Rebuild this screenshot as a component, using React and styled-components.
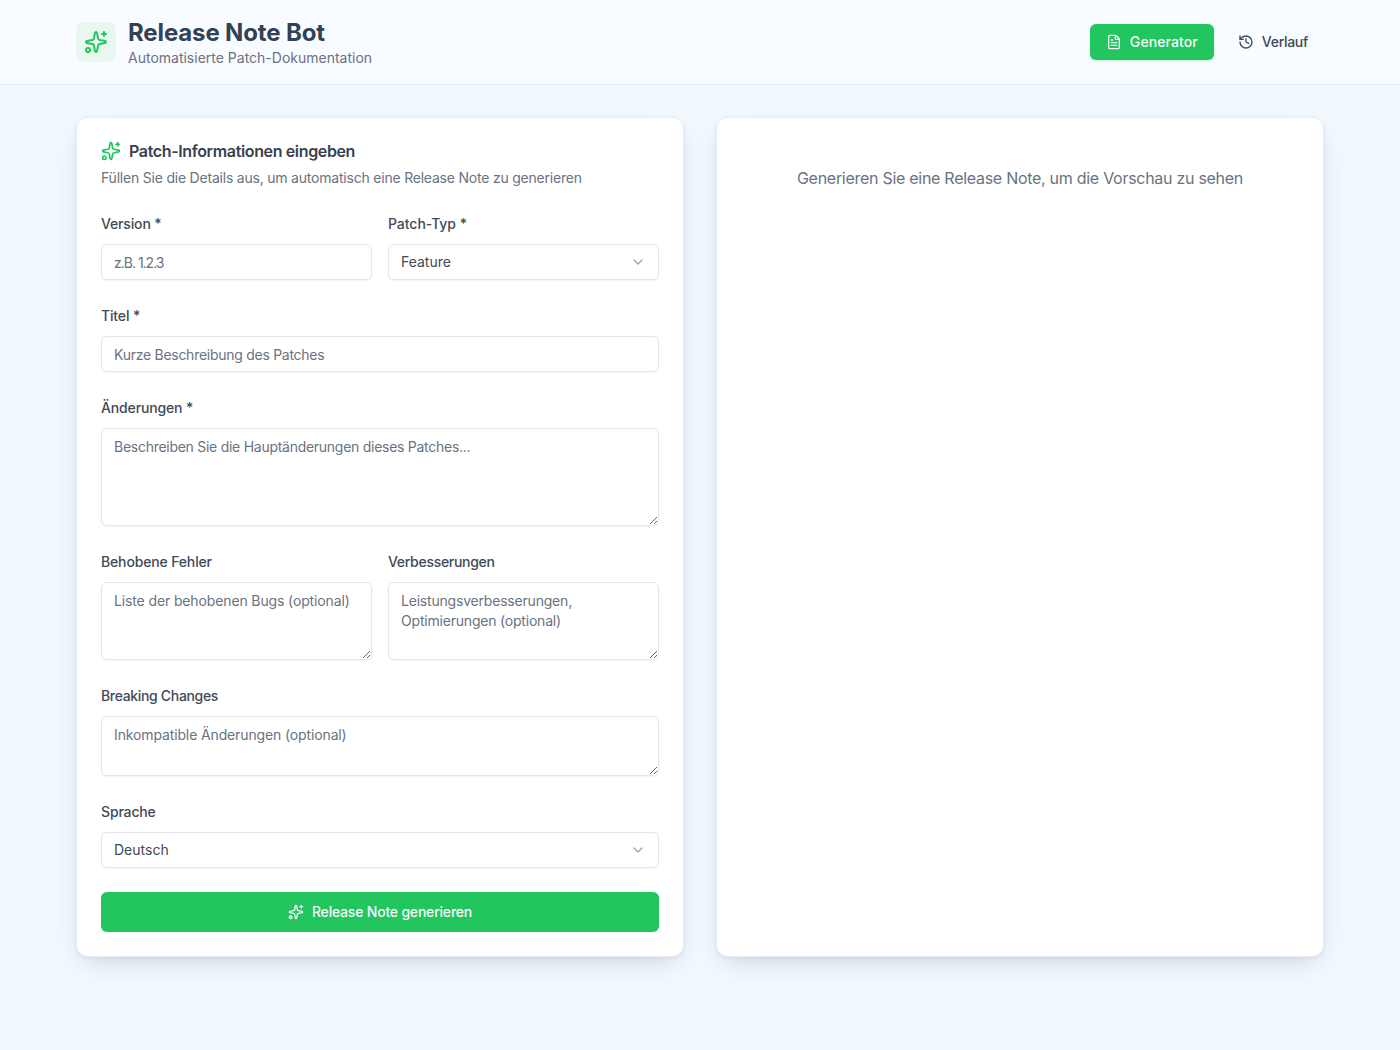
import React from "react";
import styled, { createGlobalStyle } from "styled-components";
import { Sparkles, FileText, History, ChevronDown } from "lucide-react";

const Global = createGlobalStyle`
  * { box-sizing: border-box; }
  html, body { margin: 0; padding: 0; }
  body { background: #f1f8fe; font-family: "Inter", "Noto Sans", sans-serif; color: #374151; }
`;

const Page = styled.div`
  min-height: 1050px;
  background: #f1f8fe;
`;
const Header = styled.header`
  height: 85px;
  background: #f8fbff;
  border-bottom: 1px solid #e3e8ef;
`;
const HeaderInner = styled.div`
  max-width: 1280px;
  height: 84px;
  margin: 0 auto;
  padding: 0 16px;
  display: flex;
  align-items: center;
  justify-content: space-between;
`;
const Brand = styled.div`
  display: flex;
  align-items: center;
  gap: 12px;
`;
const LogoBox = styled.div`
  width: 40px;
  height: 40px;
  border-radius: 8px;
  background: #e8f8f0;
  display: flex;
  align-items: center;
  justify-content: center;
  color: #22c55e;
`;
const BrandText = styled.div`
  display: flex;
  flex-direction: column;
`;
const AppTitle = styled.h1`
  margin: 0;
  font-size: 24px;
  line-height: 34px;
  font-weight: 700;
  color: #334155;
  letter-spacing: -0.13px;
`;
const AppSub = styled.p`
  margin: -2px 0 0;
  font-size: 14px;
  line-height: 20px;
  color: #6b7280;
`;
const Nav = styled.nav`
  display: flex;
  align-items: center;
  gap: 8px;
`;
const NavButton = styled.button`
  height: 36px;
  padding: 0 16px;
  border: 0;
  border-radius: 6px;
  display: inline-flex;
  align-items: center;
  gap: 8px;
  font: 500 14px/20px "Inter", sans-serif;
  letter-spacing: ${(p) => (p.$active ? "0.1px" : "-0.3px")};
  cursor: pointer;
  background: ${(p) => (p.$active ? "#22c55e" : "transparent")};
  color: ${(p) => (p.$active ? "#f8fafc" : "#414a56")};
  box-shadow: ${(p) => (p.$active ? "0 1px 3px rgba(34,197,94,.2)" : "none")};
`;
const Main = styled.main`
  max-width: 1280px;
  margin: 0 auto;
  padding: 32px 16px;
  display: grid;
  grid-template-columns: 1fr 1fr;
  gap: 32px;
`;
const Card = styled.section`
  background: #fff;
  border: 1px solid #e8edf3;
  border-radius: 12px;
  box-shadow: 0 10px 30px -10px rgba(30, 41, 59, 0.2), 0 2px 4px rgba(30, 41, 59, 0.06);
  padding: 24px;
`;
const CardTitle = styled.h2`
  margin: 0;
  height: 18px;
  display: flex;
  align-items: center;
  gap: 8px;
  font-size: 16px;
  line-height: 18px;
  font-weight: 600;
  letter-spacing: -0.36px;
  color: #374151;
  svg { color: #22c55e; flex: none; }
`;
const CardDesc = styled.p`
  margin: 8px 0 0;
  font-size: 14px;
  line-height: 20px;
  letter-spacing: -0.21px;
  color: #6b7280;
`;
const Form = styled.form`
  display: flex;
  flex-direction: column;
  gap: 24px;
  margin-top: 24px;
`;
const Row = styled.div`
  display: grid;
  grid-template-columns: 1fr 1fr;
  gap: 16px;
`;
const Field = styled.div`
  display: flex;
  flex-direction: column;
  gap: 8px;
  min-width: 0;
`;
const Label = styled.label`
  font-size: 14px;
  line-height: 24px;
  font-weight: 500;
  letter-spacing: ${(p) => p.$track || "-0.15px"};
  color: #414a56;
`;
const controlBase = `
  width: 100%;
  background: #fff;
  border: 1px solid #e5e7eb;
  border-radius: 6px;
  box-shadow: 0 1px 2px rgba(15, 23, 42, 0.06);
  font: 400 14px/20px "Inter", sans-serif;
  color: #414a56;
  outline: none;
`;
const Input = styled.input`
  ${controlBase}
  height: 36px;
  padding: 0 12px;
  letter-spacing: ${(p) => p.$track || "-0.27px"};
  &::placeholder { color: #6b7280; opacity: 1; }
`;
const TextArea = styled.textarea`
  ${controlBase}
  display: block;
  height: ${(p) => p.$h}px;
  padding: 8px 12px;
  resize: vertical;
  letter-spacing: ${(p) => p.$track || "-0.27px"};
  &::placeholder { color: #6b7280; opacity: 1; }
`;
const SelectTrigger = styled.button`
  ${controlBase}
  height: 36px;
  padding: 0 12px;
  display: flex;
  align-items: center;
  justify-content: space-between;
  text-align: left;
  cursor: pointer;
  svg { color: #9ca3af; }
`;
const SubmitButton = styled.button`
  height: 40px;
  width: 100%;
  border: 0;
  border-radius: 6px;
  background: #22c55e;
  color: #f8fafc;
  display: flex;
  align-items: center;
  justify-content: center;
  gap: 8px;
  font: 500 14px/20px "Inter", sans-serif;
  letter-spacing: -0.2px;
  cursor: pointer;
`;
const PreviewEmpty = styled.p`
  margin: 24px 0 0;
  text-align: center;
  font-size: 16px;
  line-height: 24px;
  letter-spacing: -0.28px;
  color: #6b7280;
`;

export default function App() {
  return (
    <Page>
      <Global />
      <Header>
        <HeaderInner>
          <Brand>
            <LogoBox><Sparkles size={24} strokeWidth={2} /></LogoBox>
            <BrandText>
              <AppTitle>Release Note Bot</AppTitle>
              <AppSub>Automatisierte Patch-Dokumentation</AppSub>
            </BrandText>
          </Brand>
          <Nav>
            <NavButton $active><FileText size={16} />Generator</NavButton>
            <NavButton><History size={16} />Verlauf</NavButton>
          </Nav>
        </HeaderInner>
      </Header>
      <Main>
        <Card>
          <CardTitle><Sparkles size={20} />Patch-Informationen eingeben</CardTitle>
          <CardDesc>Füllen Sie die Details aus, um automatisch eine Release Note zu generieren</CardDesc>
          <Form onSubmit={(e) => e.preventDefault()}>
            <Row>
              <Field>
                <Label>Version *</Label>
                <Input $track="-1px" placeholder="z.B. 1.2.3" />
              </Field>
              <Field>
                <Label $track="-0.05px">Patch-Typ *</Label>
                <SelectTrigger type="button">Feature<ChevronDown size={16} /></SelectTrigger>
              </Field>
            </Row>
            <Field>
              <Label>Titel *</Label>
              <Input placeholder="Kurze Beschreibung des Patches" />
            </Field>
            <Field>
              <Label>Änderungen *</Label>
              <TextArea $h={98} placeholder="Beschreiben Sie die Hauptänderungen dieses Patches..." />
            </Field>
            <Row>
              <Field>
                <Label>Behobene Fehler</Label>
                <TextArea $h={78} $track="-0.13px" placeholder="Liste der behobenen Bugs (optional)" />
              </Field>
              <Field>
                <Label $track="-0.3px">Verbesserungen</Label>
                <TextArea $h={78} $track="-0.2px" placeholder="Leistungsverbesserungen, Optimierungen (optional)" />
              </Field>
            </Row>
            <Field>
              <Label $track="-0.33px">Breaking Changes</Label>
              <TextArea $h={60} $track="-0.13px" placeholder="Inkompatible Änderungen (optional)" />
            </Field>
            <Field>
              <Label>Sprache</Label>
              <SelectTrigger type="button">Deutsch<ChevronDown size={16} /></SelectTrigger>
            </Field>
            <SubmitButton type="submit"><Sparkles size={16} />Release Note generieren</SubmitButton>
          </Form>
        </Card>
        <Card>
          <PreviewEmpty>Generieren Sie eine Release Note, um die Vorschau zu sehen</PreviewEmpty>
        </Card>
      </Main>
    </Page>
  );
}
